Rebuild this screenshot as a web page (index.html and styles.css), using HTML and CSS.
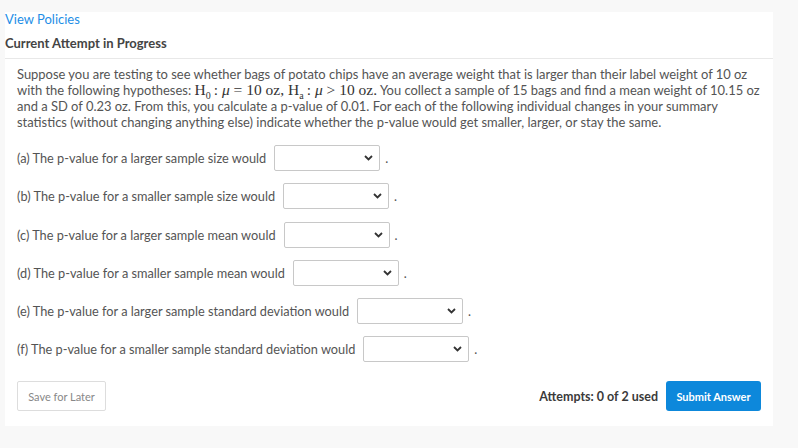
FILE: index.html
```html
<!DOCTYPE html>
<html lang="en">
<head>
    <meta charset="UTF-8">
    <meta name="viewport" content="width=device-width, initial-scale=1.0">
    <link rel="stylesheet" href="styles.css">
</head>
<body>
    <div class="panel">
        <div class="panel-header">
            <a class="policies-link" href="#">View Policies</a>
            <div class="attempt-title">Current Attempt in Progress</div>
        </div>
        <div class="question">
            <p class="question-text">Suppose you are testing to see whether bags of potato chips have an average weight that is larger than their label weight of 10 oz with the following hypotheses: <span class="math">H<sub>0</sub>&#8201;: <i>μ</i> = 10 oz, H<sub>a</sub>&#8201;: <i>μ</i> &gt; 10 oz.</span> You collect a sample of 15 bags and find a mean weight of 10.15 oz and a SD of 0.23 oz. From this, you calculate a p-value of 0.01. For each of the following individual changes in your summary statistics (without changing anything else) indicate whether the p-value would get smaller, larger, or stay the same.</p>

            <div class="parts">
                <div class="part">
                    <span class="part-label">(a) The p-value for a larger sample size would</span>
                    <span class="dropdown"><svg width="9" height="6" viewBox="0 0 9 6"><path d="M1 1 L4.5 4.5 L8 1" fill="none" stroke="#333" stroke-width="1.8"/></svg></span>
                    <span class="dot">.</span>
                </div>
                <div class="part">
                    <span class="part-label">(b) The p-value for a smaller sample size would</span>
                    <span class="dropdown"><svg width="9" height="6" viewBox="0 0 9 6"><path d="M1 1 L4.5 4.5 L8 1" fill="none" stroke="#333" stroke-width="1.8"/></svg></span>
                    <span class="dot">.</span>
                </div>
                <div class="part">
                    <span class="part-label">(c) The p-value for a larger sample mean would</span>
                    <span class="dropdown"><svg width="9" height="6" viewBox="0 0 9 6"><path d="M1 1 L4.5 4.5 L8 1" fill="none" stroke="#333" stroke-width="1.8"/></svg></span>
                    <span class="dot">.</span>
                </div>
                <div class="part">
                    <span class="part-label">(d) The p-value for a smaller sample mean would</span>
                    <span class="dropdown"><svg width="9" height="6" viewBox="0 0 9 6"><path d="M1 1 L4.5 4.5 L8 1" fill="none" stroke="#333" stroke-width="1.8"/></svg></span>
                    <span class="dot">.</span>
                </div>
                <div class="part">
                    <span class="part-label">(e) The p-value for a larger sample standard deviation would</span>
                    <span class="dropdown"><svg width="9" height="6" viewBox="0 0 9 6"><path d="M1 1 L4.5 4.5 L8 1" fill="none" stroke="#333" stroke-width="1.8"/></svg></span>
                    <span class="dot">.</span>
                </div>
                <div class="part">
                    <span class="part-label">(f) The p-value for a smaller sample standard deviation would</span>
                    <span class="dropdown"><svg width="9" height="6" viewBox="0 0 9 6"><path d="M1 1 L4.5 4.5 L8 1" fill="none" stroke="#333" stroke-width="1.8"/></svg></span>
                    <span class="dot">.</span>
                </div>
            </div>

            <div class="footer">
                <button type="button" class="btn-save">Save for Later</button>
                <div class="submit-area">
                    <span class="attempts">Attempts: 0 of 2 used</span>
                    <button type="button" class="btn-submit">Submit Answer</button>
                </div>
            </div>
        </div>
    </div>
</body>
</html>
```

FILE: styles.css
```css
body {
    margin: 0;
    padding: 12px 0 0 5px;
    background-color: #f8f8f8;
    font-family: Lato, "Open Sans", sans-serif;
    color: #545454;
}

.panel {
    width: 768px;
    background-color: #fff;
}

.panel-header {
    padding-bottom: 7px;
    border-bottom: 1px solid #e8e8e8;
}

.policies-link {
    display: block;
    font-size: 13px;
    line-height: 15px;
    color: #1e8ee6;
    text-decoration: none;
}

.attempt-title {
    margin-top: 8px;
    font-size: 13px;
    line-height: 16px;
    font-weight: bold;
    color: #444;
}

.question {
    padding: 7px 12px 15px;
}

.question-text {
    margin: 0;
    font-size: 12.95px;
    line-height: 16px;
}

.math {
    font-family: "Liberation Serif", "DejaVu Serif", serif;
    font-size: 15.5px;
    line-height: 1;
    color: #333;
}
.math sub {
    font-size: 10px;
    line-height: 0;
}

.parts {
    display: flex;
    flex-direction: column;
    gap: 12.3px;
    margin-top: 15px;
}

.part {
    display: flex;
    align-items: center;
    height: 26px;
    font-size: 12.75px;
}

.part-label {
    margin-right: 8px;
}

.dropdown {
    display: flex;
    align-items: center;
    justify-content: flex-end;
    box-sizing: border-box;
    width: 106px;
    height: 26px;
    padding-right: 6px;
    border: 1px solid #c8c8c8;
    border-radius: 2px;
    background-color: #fff;
}

.dot {
    margin-left: 5px;
}

.footer {
    display: flex;
    justify-content: space-between;
    align-items: center;
    margin-top: 19px;
}

.btn-save {
    width: 89px;
    height: 30px;
    border: 1px solid #ddd;
    border-radius: 2px;
    background-color: #fff;
    font-family: Lato, sans-serif;
    font-size: 11px;
    color: #888;
}

.submit-area {
    display: flex;
    align-items: center;
    gap: 8px;
}

.attempts {
    font-size: 12.5px;
    font-weight: bold;
    color: #3a3a3a;
}

.btn-submit {
    width: 95px;
    height: 30px;
    border: none;
    border-radius: 3px;
    background-color: #0d88db;
    font-family: Lato, sans-serif;
    font-size: 11px;
    font-weight: bold;
    color: #fff;
}
```
